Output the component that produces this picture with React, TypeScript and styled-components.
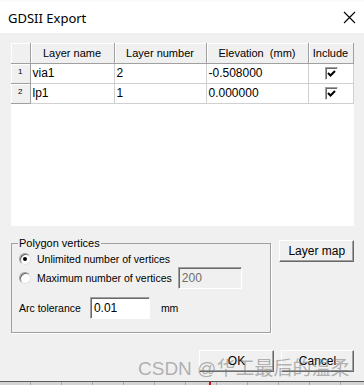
import React from "react";
import styled, { createGlobalStyle, css } from "styled-components";

const GlobalStyle = createGlobalStyle`
  html, body {
    margin: 0;
    padding: 0;
    background: #f0f0f0;
  }
  * { box-sizing: border-box; }
`;

const uiFont = `"Liberation Sans", Arial, sans-serif`;

const raised = css`
  border-top: 1px solid #ffffff;
  border-left: 1px solid #ffffff;
  border-right: 1px solid #696969;
  border-bottom: 1px solid #696969;
  box-shadow: inset -1px -1px 0 #a0a0a0;
`;

const sunken = css`
  border-top: 1px solid #a0a0a0;
  border-left: 1px solid #a0a0a0;
  border-right: 1px solid #ffffff;
  border-bottom: 1px solid #ffffff;
  box-shadow: inset 1px 1px 0 #696969;
`;

const Window = styled.div`
  position: relative;
  width: 364px;
  height: 385px;
  display: flex;
  flex-direction: column;
  background: #f0f0f0;
  font-family: ${uiFont};
  font-size: 11px;
  color: #000;
  overflow: hidden;
`;

const TitleBar = styled.div`
  height: 33px;
  flex-shrink: 0;
  background: #ffffff;
  display: flex;
  align-items: center;
  justify-content: space-between;
  padding: 0 8px 0 8px;
  border-top: 2px solid #fbfbfb;
`;

const Title = styled.span`
  font-family: "Noto Sans", "Open Sans", sans-serif;
  font-size: 13px;
  color: #000;
`;

const Body = styled.div`
  flex: 1;
  display: flex;
  flex-direction: column;
  padding: 10px 10px 0 11px;
`;

const GridArea = styled.div`
  width: 343px;
  height: 183px;
  background: #ffffff;
`;

const Table = styled.table`
  border-collapse: collapse;
  table-layout: fixed;
  font-family: ${uiFont};
  font-size: 11px;
`;

const HeadCell = styled.th<{ $w: number }>`
  width: ${(p) => p.$w}px;
  height: 20px;
  padding: 0;
  background: #f0f0f0;
  font-weight: normal;
  text-align: center;
  border-right: 1px solid #a0a0a0;
  border-bottom: 1px solid #a0a0a0;
  box-shadow: inset 1px 1px 0 #ffffff;
`;

const RowHead = styled.td`
  height: 20px;
  padding: 3px 0 0 0;
  background: #f0f0f0;
  border-right: 1px solid #a0a0a0;
  border-bottom: 1px solid #a0a0a0;
  box-shadow: inset 1px 1px 0 #ffffff;
  font-size: 8px;
  vertical-align: top;
  text-align: center;
`;

const Cell = styled.td<{ $center?: boolean }>`
  height: 20px;
  padding: 0 0 0 2px;
  border-right: 1px solid #d0d0d0;
  border-bottom: 1px solid #d0d0d0;
  text-align: ${(p) => (p.$center ? "center" : "left")};
  vertical-align: middle;
  font-size: 12px;
`;

const CheckBox = styled.span`
  display: inline-flex;
  align-items: center;
  justify-content: center;
  width: 13px;
  height: 13px;
  margin-top: 2px;
  background: #ffffff;
  ${sunken};
`;

const MiddleRow = styled.div`
  display: flex;
  align-items: flex-start;
  margin-top: 11px;
  gap: 8px;
`;

const Group = styled.fieldset`
  width: 262px;
  height: 96px;
  margin: 0;
  padding: 0 0 0 7px;
  border: 1px solid #a0a0a0;
  box-shadow: 1px 1px 0 #ffffff;
  display: flex;
  flex-direction: column;
`;

const Legend = styled.legend`
  padding: 0 1px;
  margin-left: -1px;
  font-size: 11px;
`;

const RadioRow = styled.label`
  display: flex;
  align-items: center;
  gap: 6px;
  height: 19px;
  font-size: 10.5px;
`;

const Radio = styled.span<{ $checked?: boolean }>`
  position: relative;
  width: 12px;
  height: 12px;
  border-radius: 50%;
  background: #ffffff;
  border: 1px solid #a0a0a0;
  border-right-color: #e3e3e3;
  border-bottom-color: #e3e3e3;
  box-shadow: inset 1px 1px 0 #696969;
  flex-shrink: 0;
  &::after {
    content: "";
    display: ${(p) => (p.$checked ? "block" : "none")};
    position: absolute;
    left: 3px;
    top: 3px;
    width: 4px;
    height: 4px;
    border-radius: 50%;
    background: #000;
  }
`;

const TextBox = styled.span<{ $disabled?: boolean; $w: number; $left?: number }>`
  display: inline-flex;
  align-items: center;
  width: ${(p) => p.$w}px;
  height: 22px;
  margin-left: ${(p) => p.$left ?? 0}px;
  padding-left: 3px;
  font-size: 12px;
  background: ${(p) => (p.$disabled ? "#f0f0f0" : "#ffffff")};
  color: ${(p) => (p.$disabled ? "#6d6d6d" : "#000")};
  ${sunken};
`;

const ArcRow = styled.div`
  display: flex;
  align-items: center;
  margin-top: 10px;
  font-size: 10.5px;
`;

const Unit = styled.span`
  margin-left: 11px;
`;

const Button = styled.button<{ $w: number; $top?: number }>`
  width: ${(p) => p.$w}px;
  height: 22px;
  margin-top: ${(p) => p.$top ?? 0}px;
  padding: 0;
  background: #f0f0f0;
  font-family: ${uiFont};
  font-size: 12px;
  color: #000;
  ${raised};
`;

const Footer = styled.div`
  display: flex;
  justify-content: flex-end;
  gap: 7px;
  margin-top: 17px;
`;

const Watermark = styled.div`
  position: absolute;
  left: 138px;
  top: 353px;
  font-family: "Liberation Sans", "Noto Sans CJK SC", sans-serif;
  font-size: 19px;
  color: rgba(120, 120, 120, 0.55);
  white-space: nowrap;
  pointer-events: none;
`;

const BottomStrip = styled.div`
  position: absolute;
  left: 0;
  right: 0;
  bottom: 0;
  height: 4px;
  border-top: 1px solid #5a5a5a;
  background: repeating-linear-gradient(
    90deg,
    #d4d4d4 0,
    #d4d4d4 30px,
    #a8a8a8 30px,
    #a8a8a8 31px
  );
  &::after {
    content: "";
    position: absolute;
    left: 209px;
    top: 0;
    width: 2px;
    height: 4px;
    background: #d01010;
  }
`;

const CloseIcon = () => (
  <svg width="13" height="13" viewBox="0 0 13 13">
    <path d="M1 1 L12 12 M12 1 L1 12" stroke="#000" strokeWidth="1.1" />
  </svg>
);

const Check = () => (
  <svg width="9" height="9" viewBox="0 0 9 9">
    <path d="M1 4 L3.5 6.5 L8 2" stroke="#000" strokeWidth="2" fill="none" />
  </svg>
);

const layers = [
  { name: "via1", number: "2", elevation: "-0.508000" },
  { name: "lp1", number: "1", elevation: "0.000000" },
];

const App: React.FC = () => {
  return (
    <>
      <GlobalStyle />
      <Window>
        <TitleBar>
          <Title>GDSII Export</Title>
          <CloseIcon />
        </TitleBar>
        <Body>
          <GridArea>
            <Table>
              <thead>
                <tr>
                  <HeadCell $w={19} />
                  <HeadCell $w={84}>Layer name</HeadCell>
                  <HeadCell $w={92}>Layer number</HeadCell>
                  <HeadCell $w={102}>Elevation&nbsp;&nbsp;(mm)</HeadCell>
                  <HeadCell $w={45}>Include</HeadCell>
                </tr>
              </thead>
              <tbody>
                {layers.map((l, i) => (
                  <tr key={l.name}>
                    <RowHead>{i + 1}</RowHead>
                    <Cell>{l.name}</Cell>
                    <Cell>{l.number}</Cell>
                    <Cell>{l.elevation}</Cell>
                    <Cell $center>
                      <CheckBox>
                        <Check />
                      </CheckBox>
                    </Cell>
                  </tr>
                ))}
              </tbody>
            </Table>
          </GridArea>
          <MiddleRow>
            <Group>
              <Legend>Polygon vertices</Legend>
              <RadioRow>
                <Radio $checked />
                Unlimited number of vertices
              </RadioRow>
              <RadioRow>
                <Radio />
                Maximum number of vertices
                <TextBox $disabled $w={64}>
                  200
                </TextBox>
              </RadioRow>
              <ArcRow>
                Arc tolerance
                <TextBox $w={60} $left={9}>
                  0.01
                </TextBox>
                <Unit>mm</Unit>
              </ArcRow>
            </Group>
            <Button $w={75} $top={3}>
              Layer map
            </Button>
          </MiddleRow>
          <Footer>
            <Button $w={75}>OK</Button>
            <Button $w={73}>Cancel</Button>
          </Footer>
        </Body>
        <Watermark>CSDN @华工最后的温柔</Watermark>
        <BottomStrip />
      </Window>
    </>
  );
};

export default App;
